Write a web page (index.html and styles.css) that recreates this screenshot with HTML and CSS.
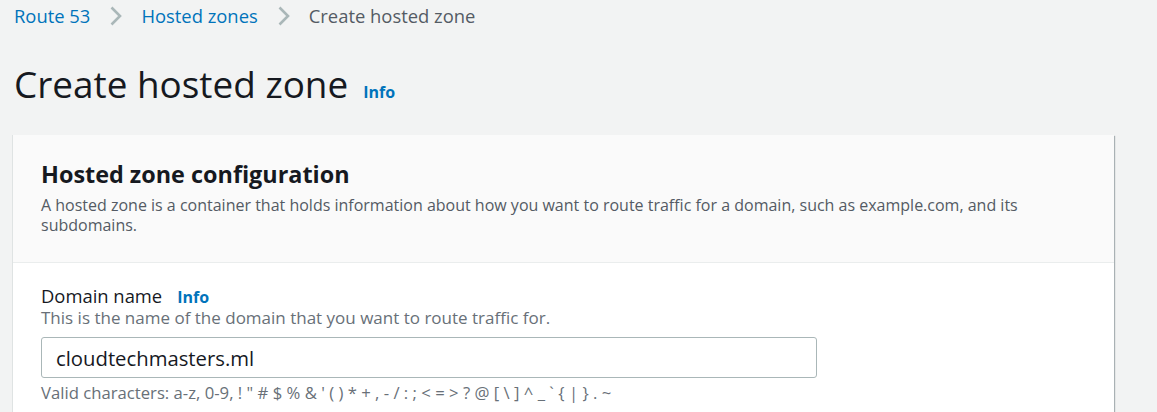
FILE: index.html
```html
<!DOCTYPE html>
<html lang="en">
<head>
<meta charset="utf-8">
<title>Create hosted zone</title>
<link rel="stylesheet" href="styles.css">
</head>
<body>
<div class="page">
  <nav class="breadcrumbs">
    <a class="crumb link" href="#">Route 53</a>
    <svg class="chev" viewBox="0 0 12 20" width="12" height="20" aria-hidden="true"><path d="M1.5 1.5 L10 10 L1.5 18.5" fill="none" stroke="#aab7b8" stroke-width="2.6"/></svg>
    <a class="crumb link" href="#">Hosted zones</a>
    <svg class="chev" viewBox="0 0 12 20" width="12" height="20" aria-hidden="true"><path d="M1.5 1.5 L10 10 L1.5 18.5" fill="none" stroke="#aab7b8" stroke-width="2.6"/></svg>
    <span class="crumb current">Create hosted zone</span>
  </nav>

  <header class="page-header">
    <h1 class="title">Create hosted zone</h1>
    <a class="info" href="#">Info</a>
  </header>

  <section class="card">
    <div class="card-header">
      <h2 class="card-title">Hosted zone configuration</h2>
      <p class="card-desc">A hosted zone is a container that holds information about how you want to route traffic for a domain, such as example.com, and its subdomains.</p>
    </div>
    <div class="card-body">
      <div class="field">
        <div class="label-row">
          <label class="label" for="domain">Domain name</label>
          <a class="info small" href="#">Info</a>
        </div>
        <div class="field-desc">This is the name of the domain that you want to route traffic for.</div>
        <input id="domain" class="input" type="text" value="cloudtechmasters.ml">
        <div class="hint">Valid characters: a-z, 0-9, ! " # $ % &amp; ' ( ) * + , - / : ; &lt; = &gt; ? @ [ \ ] ^ _ ` { | } . ~</div>
      </div>
    </div>
  </section>
</div>
</body>
</html>
```

FILE: styles.css
```css
html, body {
  margin: 0;
  padding: 0;
  background: #f2f3f3;
  font-family: "Open Sans", "Noto Sans", sans-serif;
  color: #16191f;
}

.page {
  padding: 0 43px 0 12px;
}

.breadcrumbs {
  display: flex;
  align-items: center;
  height: 32px;
  padding-left: 2px;
}

.crumb {
  font-size: 18.4px;
  text-decoration: none;
  line-height: 24px;
}

.link {
  color: #0073bb;
}

.current {
  color: #545b64;
}

.chev {
  margin: 0 19px 0 20px;
}

.page-header {
  display: flex;
  align-items: baseline;
  padding: 30px 0 0 2px;
}

.title {
  margin: 0;
  font-size: 36.9px;
  font-weight: 400;
  line-height: 44px;
}

.info {
  color: #0073bb;
  font-weight: 700;
  font-size: 16px;
  text-decoration: none;
  margin-left: 15px;
}

.card {
  margin-top: 29px;
  background: #fff;
  border-left: 1px solid #dfe3e3;
  box-shadow: 1px 1px 1px 0 rgba(0, 28, 36, 0.3);
}

.card-header {
  background: #fafafa;
  border-bottom: 1px solid #eaeded;
  padding: 24px 28px 27px 28px;
}

.card-title {
  margin: 0;
  font-size: 23.4px;
  font-weight: 700;
  line-height: 30px;
}

.card-desc {
  margin: 6px 0 0;
  font-size: 16px;
  line-height: 20px;
  color: #545b64;
}

.card-body {
  padding: 21px 28px 20px 28px;
}

.label-row {
  display: flex;
  align-items: baseline;
}

.label {
  font-size: 18.4px;
  line-height: 24px;
  color: #16191f;
}

.info.small {
  font-size: 16px;
  margin-left: 15px;
}

.field-desc {
  font-size: 17px;
  line-height: 20px;
  color: #687078;
}

.input {
  display: block;
  box-sizing: border-box;
  width: 776px;
  height: 41px;
  margin-top: 9px;
  padding: 0 14px;
  border: 1px solid #aab7b8;
  border-radius: 3px;
  font-family: "Open Sans", "Noto Sans", sans-serif;
  font-size: 20.3px;
  color: #16191f;
  background: #fff;
}

.hint {
  margin-top: 5px;
  font-size: 16.7px;
  line-height: 20px;
  color: #687078;
}
```
